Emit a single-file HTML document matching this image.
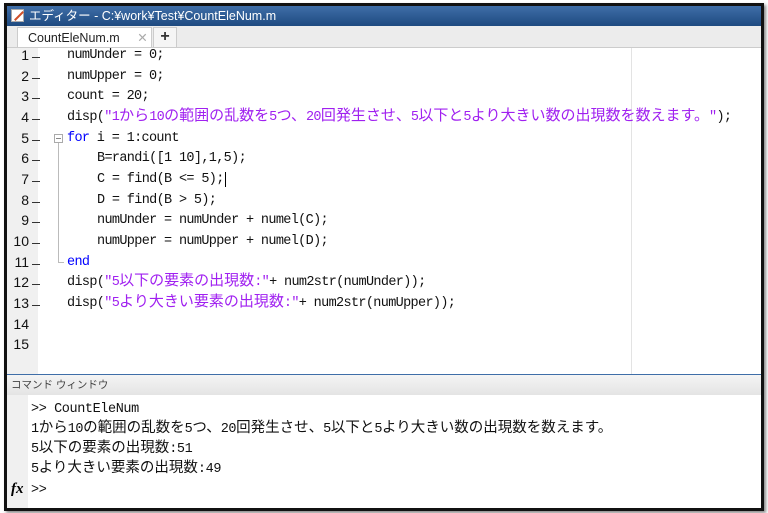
<!DOCTYPE html><html><head><meta charset="utf-8"><style>
body{margin:0;width:768px;height:513px;background:#fff;position:relative;overflow:hidden;font-family:"Liberation Sans","Noto Sans CJK JP",sans-serif}
.win{position:absolute;left:4px;top:3px;width:754px;height:502px;border:3px solid #111;box-shadow:2px 2px 3px #888;background:#fff;overflow:hidden}
.title{position:absolute;left:0;top:0;right:0;height:20px;background:linear-gradient(#3f6ea8,#1e4a80);color:#fff;font-size:12.5px;line-height:20px;padding-left:22px}
.tabs{position:absolute;top:20px;left:0;right:0;height:21px;background:#ececec;border-bottom:1px solid #ccc}
.tab{position:absolute;left:10px;top:1px;width:135px;height:20px;background:#fff;border:1px solid #ccc;border-bottom:none;font-size:12.5px;line-height:20px;padding-left:10px;box-sizing:border-box;color:#222}
.plus{position:absolute;left:146px;top:1px;width:22px;height:19px;border:1px solid #ccc;background:#f5f5f5;font-size:16px;text-align:center;line-height:18px;font-weight:bold;color:#333}
.gut{position:absolute;left:0;top:42px;width:31px;height:326px;background:#f0f0f0}
.ed{position:absolute;top:42px;left:0;right:0;height:326px;border-bottom:1px solid #3f6ea8}
.ml{position:absolute;left:624px;top:42px;width:1px;height:326px;background:#e3e3e3}
.ln{position:absolute;left:0;width:22px;text-align:right;font:14px "Liberation Sans",sans-serif;color:#111}
.dash{position:absolute;left:25px;width:8px;height:1px;background:#333}
.c{position:absolute;white-space:pre;font:13.5px/20px "Liberation Mono","Noto Sans CJK JP",monospace;letter-spacing:-0.65px;color:#111;height:20px}
.j{font-size:15px;line-height:10px;font-family:"Noto Sans CJK JP",sans-serif;letter-spacing:0}
.s{color:#a020f0}.k{color:#0000ff}
.ch{position:absolute;top:369px;left:0;right:0;height:20px;background:linear-gradient(#f4f4f4,#e4e4e4);font-size:10.5px;color:#444;line-height:20px;padding-left:4px}
.cg{position:absolute;top:389px;left:0;width:21px;bottom:0;background:#f0f0f0}
.o{position:absolute;left:24px;white-space:pre;font:13.5px/20px "Liberation Mono","Noto Sans CJK JP",monospace;letter-spacing:-0.4px;color:#111;height:20px}
.o .j{font-size:14.5px;line-height:10px;letter-spacing:0}
</style></head><body><div class="win">
<div class="title"><span style="position:absolute;left:4px;top:3px;width:13px;height:13px;background:#fff;border:1px solid #aaa;box-sizing:border-box"><span style="position:absolute;left:1px;top:5px;width:12px;height:2px;background:#d0502a;transform:rotate(-45deg)"></span></span>エディター - C:¥work¥Test¥CountEleNum.m</div>
<div class="tabs"><div class="tab">CountEleNum.m <span style="color:#aaa;margin-left:14px">✕</span></div><div class="plus">+</div></div>
<div class="ed"></div><div class="gut"></div><div class="ml"></div>
<div style="position:absolute;left:47px;top:128px;width:9px;height:9px;border:1px solid #aaa;box-sizing:border-box;background:#fff"><div style="position:absolute;left:1px;top:3px;width:5px;height:1px;background:#888"></div></div>
<div style="position:absolute;left:51px;top:137px;width:1px;height:119px;background:#bbb"></div>
<div style="position:absolute;left:51px;top:256px;width:6px;height:1px;background:#bbb"></div>
<div class="ln" style="top:41px">1</div><div class="dash" style="top:51px"></div>
<div class="ln" style="top:62px">2</div><div class="dash" style="top:72px"></div>
<div class="ln" style="top:82px">3</div><div class="dash" style="top:92px"></div>
<div class="ln" style="top:103px">4</div><div class="dash" style="top:113px"></div>
<div class="ln" style="top:124px">5</div><div class="dash" style="top:134px"></div>
<div class="ln" style="top:144px">6</div><div class="dash" style="top:154px"></div>
<div class="ln" style="top:165px">7</div><div class="dash" style="top:175px"></div>
<div class="ln" style="top:186px">8</div><div class="dash" style="top:196px"></div>
<div class="ln" style="top:206px">9</div><div class="dash" style="top:216px"></div>
<div class="ln" style="top:227px">10</div><div class="dash" style="top:237px"></div>
<div class="ln" style="top:248px">11</div><div class="dash" style="top:258px"></div>
<div class="ln" style="top:268px">12</div><div class="dash" style="top:278px"></div>
<div class="ln" style="top:289px">13</div><div class="dash" style="top:299px"></div>
<div class="ln" style="top:310px">14</div>
<div class="ln" style="top:330px">15</div>
<div class="c" style="left:60px;top:40px">numUnder = 0;</div>
<div class="c" style="left:60px;top:61px">numUpper = 0;</div>
<div class="c" style="left:60px;top:81px">count = 20;</div>
<div class="c" style="left:60px;top:102px">disp(<span class="s">"1<span class="j">から</span>10<span class="j">の範囲の乱数を</span>5<span class="j">つ、</span>20<span class="j">回発生させ、</span>5<span class="j">以下と</span>5<span class="j">より大きい数の出現数を数えます。</span>"</span>);</div>
<div class="c" style="left:60px;top:123px"><span class="k">for</span> i = 1:count</div>
<div class="c" style="left:90px;top:143px">B=randi([1 10],1,5);</div>
<div class="c" style="left:90px;top:164px">C = find(B &lt;= 5);<span style="border-left:1px solid #000;margin-left:1px"> </span></div>
<div class="c" style="left:90px;top:185px">D = find(B &gt; 5);</div>
<div class="c" style="left:90px;top:205px">numUnder = numUnder + numel(C);</div>
<div class="c" style="left:90px;top:226px">numUpper = numUpper + numel(D);</div>
<div class="c" style="left:60px;top:247px"><span class="k">end</span></div>
<div class="c" style="left:60px;top:267px">disp(<span class="s">"5<span class="j">以下の要素の出現数</span>:"</span>+ num2str(numUnder));</div>
<div class="c" style="left:60px;top:288px">disp(<span class="s">"5<span class="j">より大きい要素の出現数</span>:"</span>+ num2str(numUpper));</div>
<div class="ch">コマンド ウィンドウ</div>
<div class="cg"></div>
<div class="o" style="top:394px">&gt;&gt; CountEleNum</div>
<div class="o" style="top:414px">1<span class="j">から</span>10<span class="j">の範囲の乱数を</span>5<span class="j">つ、</span>20<span class="j">回発生させ、</span>5<span class="j">以下と</span>5<span class="j">より大きい数の出現数を数えます。</span></div>
<div class="o" style="top:434px">5<span class="j">以下の要素の出現数</span>:51</div>
<div class="o" style="top:454px">5<span class="j">より大きい要素の出現数</span>:49</div>
<div style="position:absolute;left:4px;top:475px;font:italic bold 15px 'Liberation Serif',serif">fx</div>
<div class="o" style="top:475px">&gt;&gt;</div>
</div></body></html>
